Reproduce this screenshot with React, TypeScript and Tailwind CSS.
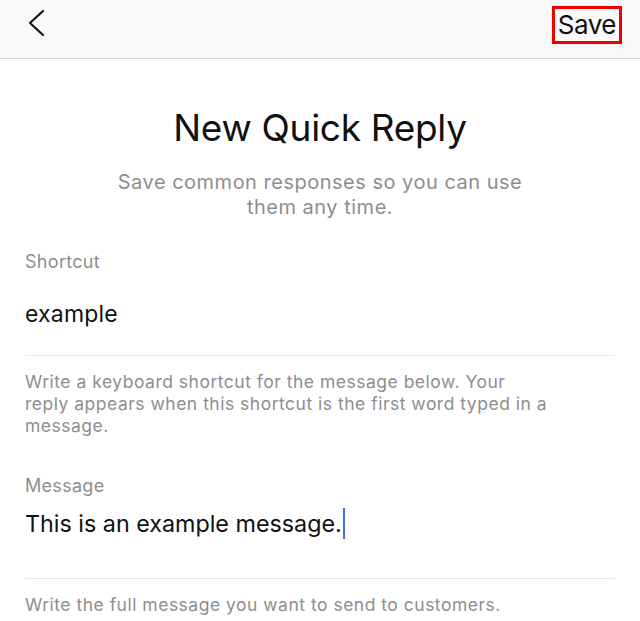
import React from 'react';

// Quick reply editor screen: top bar, heading and two form fields

interface FieldProps {
  label: string;
  value: string;
  hint: string;
  valueClass: string;
  showCursor?: boolean;
}

const Field: React.FC<FieldProps> = ({ label, value, hint, valueClass, showCursor }) => (
  <div className="px-[25px]">
    <div className="text-[18px] leading-[22px] tracking-[0.3px] text-[#8e8e8e]">{label}</div>
    <div className={`border-b border-[#e9e9e9] text-[#111] ${valueClass}`}>
      <span>{value}</span>
      {showCursor && <span className="inline-block w-[2px] h-[31px] bg-[#3d6df0] align-[-7px] ml-[1px]" />}
    </div>
    <p className="pt-[15px] w-[526px] text-[17.5px] leading-[22px] tracking-[0.5px] text-[#8e8e8e]">{hint}</p>
  </div>
);

const App: React.FC = () => {
  return (
    <div className="w-[640px] h-[621px] overflow-hidden bg-white font-['Inter',sans-serif]">
      <header className="h-[59px] bg-[#f9f9f9] border-b border-[#d4d4d4] flex items-center justify-between pl-[26px] pr-[18px]">
        <button className="w-[24px] h-[30px] -mt-[12px] flex items-center">
          <svg width="20" height="28" viewBox="0 0 20 28" fill="none">
            <path d="M17 2 L4 14 L17 26" stroke="#111" strokeWidth="2.2" strokeLinecap="round" strokeLinejoin="round" />
          </svg>
        </button>
        <button className="-mt-[8px] border-[3px] border-[#ee0000] px-[3px] h-[38px] text-[26px] leading-[30px] text-[#111] tracking-[-0.5px]">
          Save
        </button>
      </header>

      <section className="pt-[46px] text-center">
        <h1 className="text-[37px] leading-[46px] text-[#111] tracking-[-0.3px]">New Quick Reply</h1>
        <p className="mt-[19px] mx-auto w-[440px] text-[20px] leading-[25px] tracking-[0.5px] text-[#8e8e8e]">
          Save common responses so you can use them any time.
        </p>
      </section>

      <div className="pt-[31px]">
        <Field
          label="Shortcut"
          value="example"
          hint="Write a keyboard shortcut for the message below. Your reply appears when this shortcut is the first word typed in a message."
          valueClass="pt-[26px] pb-[25px] text-[23px] leading-[31px] tracking-[0.2px]"
        />
      </div>
      <div className="pt-[38px]">
        <Field
          label="Message"
          value="This is an example message."
          hint="Write the full message you want to send to customers."
          valueClass="pt-[11px] pb-[39px] text-[23.3px] leading-[31px]"
          showCursor
        />
      </div>
    </div>
  );
};

export default App;
